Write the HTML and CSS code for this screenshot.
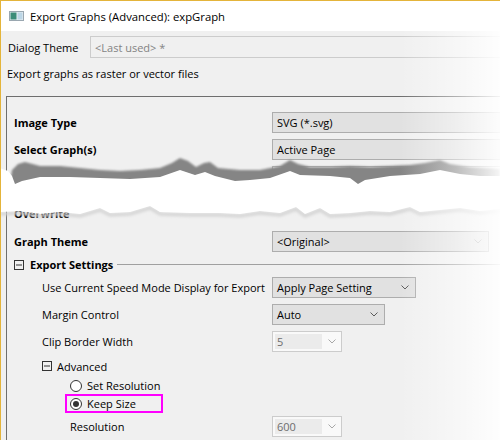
FILE: index.html
```html
<!DOCTYPE html>
<html>
<head>
<meta charset="utf-8">
<link rel="stylesheet" href="styles.css">
</head>
<body>
<div class="window">
  <div class="titlebar">
    <svg class="appicon" width="15" height="10" viewBox="0 0 15 10">
      <rect x="0.5" y="0.5" width="14" height="9" fill="#e9eef2" stroke="#9aa7b0"/>
      <rect x="1.5" y="1.5" width="6" height="7" fill="#3b8c78"/>
      <rect x="8.5" y="1.5" width="5" height="7" fill="#bcd6e6"/>
    </svg>
    <span>Export Graphs (Advanced): expGraph</span>
  </div>
  <div class="theme-row">
    <span class="theme-label">Dialog Theme</span>
    <div class="combo disabled wide">&lt;Last used&gt; *</div>
  </div>
  <p class="desc">Export graphs as raster or vector files</p>
  <div class="panel">
    <div class="row">
      <span class="label b">Image Type</span>
      <div class="combo wide">SVG (*.svg)</div>
    </div>
    <div class="row">
      <span class="label b">Select Graph(s)</span>
      <div class="combo wide">Active Page</div>
    </div>
    <div class="hidden-block">
      <div class="row">
        <span class="label b">File Name</span>
        <div class="combo edit wide">&lt;long name&gt;</div>
      </div>
      <div class="row lower">
        <span class="label b">Overwrite</span>
      </div>
    </div>
    <div class="row">
      <span class="label b">Graph Theme</span>
      <div class="combo w217">&lt;Original&gt;<svg class="chev light" width="8" height="5" viewBox="0 0 8 5"><polyline points="0.5,0.5 4,4 7.5,0.5" fill="none" stroke="currentColor"/></svg></div>
    </div>
    <div class="group">
      <svg class="box" width="10" height="10" viewBox="0 0 10 10"><rect x="0.5" y="0.5" width="9" height="9" fill="none" stroke="#333"/><line x1="2" y1="5" x2="8" y2="5" stroke="#333"/></svg>
      <span class="group-title">Export Settings</span>
      <span class="sep"></span>
    </div>
    <div class="row">
      <span class="label l1">Use Current Speed Mode Display for Export</span>
      <div class="combo w144">Apply Page Setting<svg class="chev" width="8" height="5" viewBox="0 0 8 5"><polyline points="0.5,0.5 4,4 7.5,0.5" fill="none" stroke="currentColor"/></svg></div>
    </div>
    <div class="row">
      <span class="label l1">Margin Control</span>
      <div class="combo w113">Auto<svg class="chev" width="8" height="5" viewBox="0 0 8 5"><polyline points="0.5,0.5 4,4 7.5,0.5" fill="none" stroke="currentColor"/></svg></div>
    </div>
    <div class="row">
      <span class="label l1">Clip Border Width</span>
      <div class="ecombo"><span class="field">5</span><svg class="chev light" width="8" height="5" viewBox="0 0 8 5"><polyline points="0.5,0.5 4,4 7.5,0.5" fill="none" stroke="currentColor"/></svg></div>
    </div>
    <div class="subgroup">
      <svg class="box" width="10" height="10" viewBox="0 0 10 10"><rect x="0.5" y="0.5" width="9" height="9" fill="none" stroke="#333"/><line x1="2" y1="5" x2="8" y2="5" stroke="#333"/></svg>
      <span class="sub-title">Advanced</span>
    </div>
    <div class="radio-row">
      <span class="radio"></span>
      <span>Set Resolution</span>
    </div>
    <div class="radio-row marked">
      <div class="highlight">
        <span class="radio on"></span>
        <span>Keep Size</span>
      </div>
    </div>
    <div class="row">
      <span class="label l2">Resolution</span>
      <div class="ecombo"><span class="field">600</span><svg class="chev light" width="8" height="5" viewBox="0 0 8 5"><polyline points="0.5,0.5 4,4 7.5,0.5" fill="none" stroke="currentColor"/></svg></div>
    </div>
  </div>

  <svg class="tear" width="500" height="75" viewBox="0 150 500 75">
    <defs>
      <filter id="blur" x="-5%" y="-50%" width="110%" height="200%"><feGaussianBlur stdDeviation="1.3"/></filter>
      <filter id="blur2" x="-5%" y="-50%" width="110%" height="200%"><feGaussianBlur stdDeviation="1.6"/></filter>
    </defs>
    <polygon filter="url(#blur)" fill="#858585" points="12,170 18,164 25,162 40,166 60,166 80,168 100,170 120,171 140,170 160,168 172,163 180,158 188,161 196,167 204,163 210,162 218,168 240,170 260,170 280,166 290,160 298,164 310,167 330,167 350,166 370,167 390,166 410,165 425,163 440,160 450,164 470,167 490,168 500,169 500,179 480,179 460,177 440,173 420,177 390,179 365,183 358,187 350,181 330,179 300,178 290,174 270,181 250,183 235,184 215,179 205,175 195,178 180,173 160,180 130,182 100,181 70,180 40,180 22,185 15,189 10,183"/>
    <polyline filter="url(#blur2)" fill="none" stroke="#d2d2d2" stroke-width="3" transform="translate(0,2)" points="0,212 20,211 40,214 60,212 80,214 100,208 110,213 130,212 150,206 160,212 190,213 220,213 240,214 260,211 280,213 296,207 305,214 320,208 330,214 350,213 370,211 390,212 410,207 420,212 440,210 460,208 480,211 500,209"/>
    <polygon fill="#ffffff" points="0,168 8,171 12,176 15,184 22,181 40,177 70,177 100,178 130,179 160,177 180,170 195,175 205,172 215,176 235,181 250,180 270,178 290,171 300,175 330,176 350,178 358,184 365,180 390,176 420,174 440,170 460,174 480,176 500,176 500,209 480,211 460,208 440,210 420,212 410,207 390,212 370,211 350,213 330,214 320,208 305,214 296,207 280,213 260,211 240,214 220,213 190,213 160,212 150,206 130,212 110,213 100,208 80,214 60,212 40,214 20,211 0,212"/>
  </svg>
  <div class="fade"></div>
</div>
</body>
</html>
```
FILE: styles.css
```css
* { box-sizing: border-box; }

body {
  margin: 0;
  background: #ffffff;
  font-family: "Open Sans", "Noto Sans", sans-serif;
  font-size: 11px;
  color: #000;
}

.window {
  position: relative;
  width: 500px;
  height: 440px;
  overflow: hidden;
  background: #f0f0f0;
  border-top: 1px solid #e4b43a;
  border-left: 1px solid #e4b43a;
}

.titlebar {
  height: 30px;
  background: #ffffff;
  display: flex;
  align-items: center;
  gap: 6px;
  padding-left: 8px;
  font-size: 11.3px;
}

.appicon { flex: none; }

.theme-row {
  display: flex;
  align-items: center;
  height: 22px;
  margin-top: 5px;
  padding-left: 7px;
}

.theme-label {
  width: 82px;
  flex: none;
}

.desc {
  margin: 8px 0 0 6px;
  line-height: 15px;
}

.panel {
  margin: 15px 0 0 5px;
  padding: 12px 0 0 7px;
  border-top: 1px solid #6e6e6e;
  border-left: 1px solid #6e6e6e;
}

.row {
  display: flex;
  align-items: center;
  height: 27px;
}

.label {
  width: 258px;
  flex: none;
  white-space: nowrap;
}

.label.b { font-weight: 700; }
.label.l1 { padding-left: 28px; }
.label.l2 { padding-left: 56px; }

.combo {
  height: 21px;
  display: flex;
  align-items: center;
  padding: 0 6px 0 4px;
  border: 1px solid #adadad;
  background: #e1e1e1;
  white-space: nowrap;
}

.combo.disabled {
  height: 22px;
  border-color: #cccccc;
  background: #f0f0f0;
  color: #838383;
}

.combo.edit {
  background: #ffffff;
  border-color: #b5b5b5;
}

.combo.wide {
  flex: 1;
  margin-right: -12px;
}

.w217 { width: 217px; }
.w144 { width: 144px; }
.w113 { width: 113px; }

.chev {
  margin-left: auto;
  color: #5a5a5a;
  flex: none;
}

.chev.light { color: #a8a8a8; }

.ecombo {
  width: 70px;
  height: 21px;
  display: flex;
  align-items: center;
  padding: 0 5px 0 2px;
  border: 1px solid #cccccc;
  background: #f9f9f9;
}

.field {
  width: 47px;
  height: 15px;
  line-height: 15px;
  padding-left: 2px;
  background: #ebebeb;
  color: #6d6d6d;
}

.hidden-block {
  height: 65px;
}

.row.lower {
  margin-top: 10px;
  height: 26px;
}

.group {
  display: flex;
  align-items: center;
  height: 19px;
}

.box { flex: none; }

.group-title {
  font-weight: 700;
  margin-left: 6px;
}

.sep {
  flex: 1;
  border-top: 1px solid #a0a0a0;
  margin-left: 4px;
}

.subgroup {
  display: flex;
  align-items: center;
  height: 22px;
  padding-left: 28px;
}

.sub-title { margin-left: 5px; }

.radio-row {
  display: flex;
  align-items: center;
  gap: 5px;
  height: 17px;
  padding-left: 56px;
}

.radio-row.marked {
  height: 19px;
  padding-left: 51px;
}

.highlight {
  display: flex;
  align-items: center;
  gap: 5px;
  width: 98px;
  height: 19px;
  padding-left: 3px;
  border: 2px solid #ff00ff;
}

.radio {
  width: 12px;
  height: 12px;
  border: 1px solid #333;
  border-radius: 50%;
  background: #ffffff;
  flex: none;
  display: flex;
  align-items: center;
  justify-content: center;
}

.radio.on::after {
  content: "";
  width: 6px;
  height: 6px;
  border-radius: 50%;
  background: #333;
}

.tear {
  position: absolute;
  left: -1px;
  top: 149px;
}

.fade {
  position: absolute;
  top: -1px;
  right: 0;
  width: 100px;
  height: 441px;
  background: linear-gradient(to right, rgba(255,255,255,0) 0%, rgba(255,255,255,0.45) 55%, rgba(255,255,255,0.92) 100%);
  pointer-events: none;
}
```
